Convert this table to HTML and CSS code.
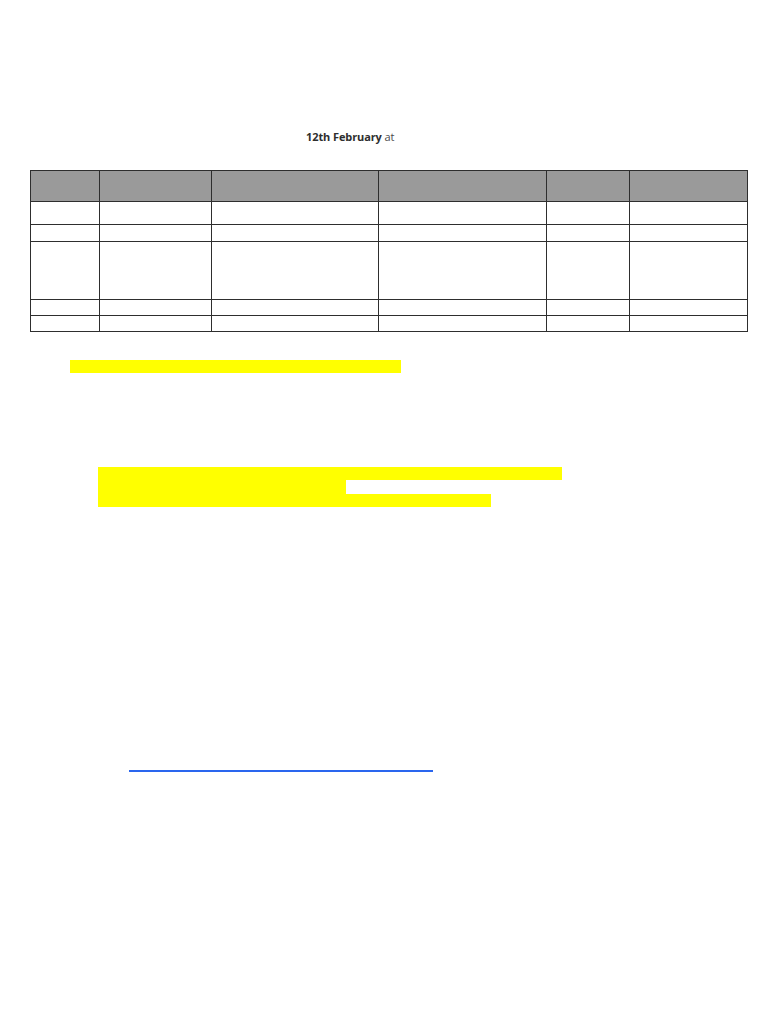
FILE: index.html
```html
<!DOCTYPE html>
<html lang="en">
<head>
<meta charset="utf-8">
<title>Document</title>
<link rel="stylesheet" href="styles.css">
</head>
<body>
<main class="page">
  <p class="heading"><strong>12th February</strong> at</p>

  <table class="grid">
    <colgroup>
      <col class="c1"><col class="c2"><col class="c3"><col class="c4"><col class="c5"><col class="c6">
    </colgroup>
    <thead>
      <tr class="r-head"><th></th><th></th><th></th><th></th><th></th><th></th></tr>
    </thead>
    <tbody>
      <tr class="r-a"><td></td><td></td><td></td><td></td><td></td><td></td></tr>
      <tr class="r-b"><td></td><td></td><td></td><td></td><td></td><td></td></tr>
      <tr class="r-c"><td></td><td></td><td></td><td></td><td></td><td></td></tr>
      <tr class="r-d"><td></td><td></td><td></td><td></td><td></td><td></td></tr>
      <tr class="r-d"><td></td><td></td><td></td><td></td><td></td><td></td></tr>
    </tbody>
  </table>

  <div class="mark mark-one"></div>

  <div class="mark-block">
    <div class="mark mark-line l1"></div>
    <div class="mark mark-line l2"></div>
    <div class="mark mark-line l3"></div>
  </div>

  <div class="link-line"></div>
</main>
</body>
</html>
```

FILE: styles.css
```css
html, body {
  margin: 0;
  padding: 0;
  background: #ffffff;
}

.page {
  font-family: "Open Sans", "DejaVu Sans", sans-serif;
  color: #4a4a4a;
  display: flow-root;
}

.heading {
  margin: 0;
  padding: 129px 0 0 306px;
  font-size: 11px;
  line-height: 16px;
  letter-spacing: -0.1px;
}

.heading strong {
  font-weight: 700;
  color: #2e2e2e;
}

.grid {
  margin: 25px 0 0 30px;
  border-collapse: collapse;
  table-layout: fixed;
  width: 717px;
}

.grid th,
.grid td {
  border: 1px solid #2e2e2e;
  padding: 0;
}

.grid th {
  background: #9a9a9a;
}

.c1 { width: 69px; }
.c2 { width: 112px; }
.c3 { width: 167px; }
.c4 { width: 168px; }
.c5 { width: 83px; }
.c6 { width: 118px; }

.r-head { height: 31px; }
.r-a { height: 23px; }
.r-b { height: 17px; }
.r-c { height: 58px; }
.r-d { height: 16px; }

.mark {
  background: #ffff00;
}

.mark-one {
  margin: 28px 0 0 70px;
  width: 331px;
  height: 13px;
}

.mark-block {
  margin: 94px 0 0 98px;
}

.mark-line {
  height: 13.3px;
}

.l1 { width: 464px; }
.l2 { width: 248px; }
.l3 { width: 393px; }

.link-line {
  margin: 263px 0 0 129px;
  width: 304px;
  height: 2px;
  background: #2a66ee;
}
```
